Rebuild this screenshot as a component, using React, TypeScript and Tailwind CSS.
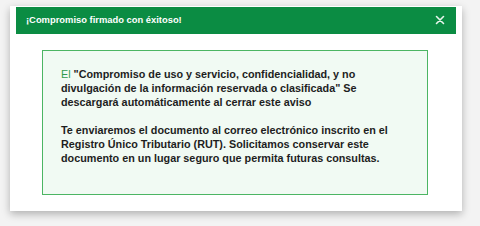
import React from "react";

export default function App() {
  return (
    <div className="w-[480px] h-[226px] bg-[#f3f3f3] pt-[6px] pl-[10px] overflow-hidden" style={{ fontFamily: '"Liberation Sans", Arial, sans-serif' }}>
      <div className="w-[452px] h-[205px] bg-white shadow-[0_3px_8px_rgba(0,0,0,0.28)] pt-[1px] px-[6px]">
        <div className="h-[27px] bg-[#0b8c43] flex items-center justify-between pl-[10px] pr-[11px]">
          <span className="text-white text-[9.4px] font-bold">¡Compromiso firmado con éxitoso!</span>
          <svg width="10" height="10" viewBox="0 0 10 10" className="mt-[-2px]">
            <path d="M1.5 1.5 L8.5 8.5 M8.5 1.5 L1.5 8.5" stroke="#e8f5ec" strokeWidth="1.6" strokeLinecap="round" />
          </svg>
        </div>
        <div className="ml-[26px] mt-[16px] w-[386px] h-[145px] border-[1.5px] border-[#4cb563] bg-[#f1faf3] pt-[16px] pl-[18px]">
          <div className="w-[340px]">
            <p className="text-[10.8px] leading-[14px] font-bold text-[#1e1e1e]">
              <span className="font-normal text-[#2f9a4b]">El</span> "Compromiso de uso y servicio, confidencialidad, y no divulgación de la información reservada o clasificada" Se descargará automáticamente al cerrar este aviso
            </p>
            <p className="mt-[14px] text-[10.8px] leading-[14px] font-bold text-[#1e1e1e]">
              Te enviaremos el documento al correo electrónico inscrito en el Registro Único Tributario (RUT). Solicitamos conservar este documento en un lugar seguro que permita futuras consultas.
            </p>
          </div>
        </div>
      </div>
    </div>
  );
}
